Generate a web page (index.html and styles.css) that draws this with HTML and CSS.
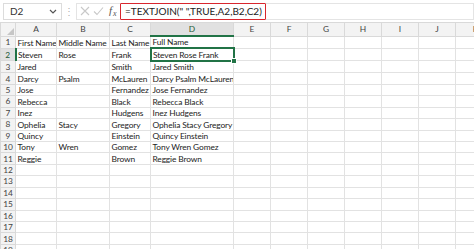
FILE: index.html
```html
<!doctype html>
<html lang="en">
<head>
    <meta charset="UTF-8">
    <meta name="viewport" content="width=device-width, initial-scale=1.0">
    <title>TEXTJOIN</title>
    <link rel="stylesheet" href="styles.css">
</head>
<body>
    <!-- Formula bar -->
    <div class="formula-bar">
        <div class="name-box">
            <span>D2</span>
            <svg class="chevron" width="8" height="5" viewBox="0 0 8 5"><path d="M1 1 L4 4 L7 1" fill="none" stroke="#555" stroke-width="1.2"/></svg>
        </div>
        <div class="grip">⋮</div>
        <div class="fx-tools">
            <svg width="10" height="10" viewBox="0 0 10 10"><path d="M1 1 L9 9 M9 1 L1 9" stroke="#c8c8c8" stroke-width="1.1"/></svg>
            <svg width="11" height="10" viewBox="0 0 11 10"><path d="M1 5.5 L4 8.5 L10 1.5" fill="none" stroke="#c8c8c8" stroke-width="1.1"/></svg>
            <span class="fx">f<span class="fx-x">x</span></span>
        </div>
        <div class="formula-input">
            <span class="formula-text">=TEXTJOIN(" ",TRUE,A2,B2,C2)</span>
        </div>
    </div>

    <!-- Sheet -->
    <table class="sheet">
        <colgroup>
            <col class="c-head">
            <col class="c-a">
            <col class="c-b">
            <col class="c-c">
            <col class="c-d">
            <col class="c-e"><col class="c-e"><col class="c-e"><col class="c-e"><col class="c-e"><col class="c-e">
            <col class="c-k">
        </colgroup>
        <thead>
            <tr>
                <th class="corner"><span class="tri"></span></th>
                <th>A</th><th>B</th><th>C</th><th class="sel-col">D</th>
                <th>E</th><th>F</th><th>G</th><th>H</th><th>I</th><th>J</th><th>K</th>
            </tr>
        </thead>
        <tbody id="rows"></tbody>
    </table>

    <script>
        const data = [
            ['First Name', 'Middle Name', 'Last Name', 'Full Name'],
            ['Steven', 'Rose', 'Frank', 'Steven Rose Frank'],
            ['Jared', '', 'Smith', 'Jared Smith'],
            ['Darcy', 'Psalm', 'McLauren', 'Darcy Psalm McLauren'],
            ['Jose', '', 'Fernandez', 'Jose Fernandez'],
            ['Rebecca', '', 'Black', 'Rebecca Black'],
            ['Inez', '', 'Hudgens', 'Inez Hudgens'],
            ['Ophelia', 'Stacy', 'Gregory', 'Ophelia Stacy Gregory'],
            ['Quincy', '', 'Einstein', 'Quincy Einstein'],
            ['Tony', 'Wren', 'Gomez', 'Tony Wren Gomez'],
            ['Reggie', '', 'Brown', 'Reggie Brown']
        ];
        const rows = document.getElementById('rows');
        for (let r = 1; r <= 19; r++) {
            const tr = document.createElement('tr');
            const th = document.createElement('th');
            th.textContent = r;
            if (r === 2) th.className = 'sel-row';
            tr.appendChild(th);
            const vals = data[r - 1] || [];
            for (let c = 0; c < 11; c++) {
                const td = document.createElement('td');
                td.textContent = vals[c] || '';
                if (r === 2 && c === 3) {
                    td.className = 'active';
                    const h = document.createElement('span');
                    h.className = 'handle';
                    td.appendChild(h);
                }
                tr.appendChild(td);
            }
            rows.appendChild(tr);
        }
    </script>
</body>
</html>
```

FILE: styles.css
```css
body {
    margin: 0;
    width: 474px;
    height: 249px;
    overflow: hidden;
    background: #fff;
    font-family: Lato, "Liberation Sans", sans-serif;
    color: #222;
}
.formula-bar {
    height: 22px;
    display: flex;
    align-items: center;
    padding-left: 3px;
    box-sizing: border-box;
}
.name-box {
    width: 59px;
    height: 17px;
    box-sizing: border-box;
    border: 1px solid #dcdcdc;
    display: flex;
    align-items: center;
    justify-content: space-between;
    padding: 0 4px 0 6px;
    font-size: 10px;
    color: #333;
}
.grip {
    width: 14px;
    text-align: center;
    font-size: 10px;
    color: #b0b0b0;
}
.fx-tools {
    width: 44px;
    height: 17px;
    box-sizing: border-box;
    border: 1px solid #e4e4e4;
    border-right: none;
    display: flex;
    align-items: center;
    gap: 3px;
    padding-left: 3px;
}
.fx {
    font-family: "Liberation Serif", serif;
    font-style: italic;
    font-size: 11px;
    line-height: 12px;
    color: #555;
    margin-left: 2px;
}
.fx-x {
    font-size: 8px;
    position: relative;
    top: 2px;
    margin-left: 1px;
}
.formula-input {
    flex: 1;
    height: 17px;
    box-sizing: border-box;
    border: 1px solid #e4e4e4;
    display: flex;
    align-items: center;
}
.formula-text {
    height: 17px;
    box-sizing: border-box;
    border: 1.5px solid #d8262e;
    border-radius: 1px;
    padding: 0 3px 0 4px;
    font-size: 10px;
    line-height: 14px;
    margin-left: -1px;
    color: #222;
}
.sheet {
    border-collapse: collapse;
    table-layout: fixed;
    width: 494px;
}
.c-head { width: 15px; }
.c-a { width: 41px; }
.c-b { width: 53px; }
.c-c { width: 41px; }
.c-d { width: 83px; }
.c-e { width: 37px; }
.c-k { width: 40px; }
.sheet th {
    background: #f3f3f3;
    color: #444;
    font-weight: normal;
    font-size: 8.4px;
    border: 1px solid #d9d9d9;
    padding: 0;
    text-align: center;
}
.sheet thead th {
    height: 12px;
    line-height: 12px;
}
.sheet .corner {
    position: relative;
}
.tri {
    position: absolute;
    right: 1px;
    bottom: 1px;
    width: 0;
    height: 0;
    border-left: 7px solid transparent;
    border-bottom: 7px solid #c6c6c6;
}
.sheet th.sel-col {
    background: #e1e1e1;
    border-bottom: 2px solid #217346;
    color: #215a36;
}
.sheet th.sel-row {
    background: #e1e1e1;
    border-right: 2px solid #217346;
    color: #215a36;
}
.sheet td {
    height: 10.45px;
    border: 1px solid #e2e2e2;
    padding: 0 0 0 1.5px;
    font-size: 8.4px;
    letter-spacing: -0.12px;
    line-height: 10px;
    white-space: nowrap;
    overflow: hidden;
    vertical-align: bottom;
}
.sheet tbody th {
    height: 10.45px;
    line-height: 10px;
}
.sheet td.active {
    border: 2px solid #217346;
    position: relative;
    overflow: visible;
}
.handle {
    position: absolute;
    right: -4px;
    bottom: -4px;
    width: 4px;
    height: 4px;
    background: #217346;
    border: 1px solid #fff;
}
```
